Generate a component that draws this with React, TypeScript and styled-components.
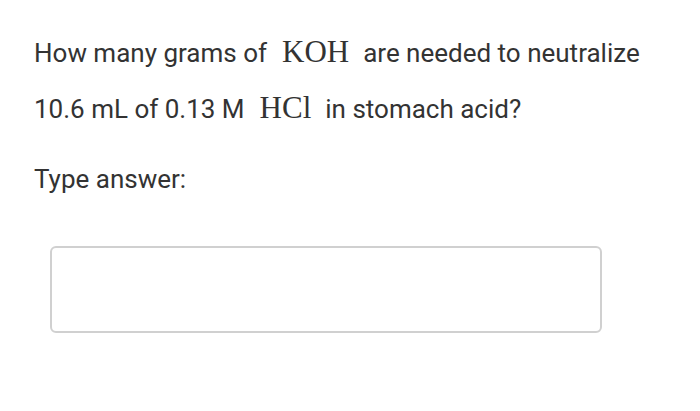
import React from "react";
import styled, { createGlobalStyle } from "styled-components";

const Global = createGlobalStyle`
  html, body { margin: 0; padding: 0; background: #fff; }
  body { font-family: Roboto, "Noto Sans", sans-serif; color: #333; }
`;

const Page = styled.div`
  width: 700px;
  height: 411px;
  box-sizing: border-box;
  padding: 25px 0 0 34px;
`;

const Question = styled.p`
  margin: 0;
  font-size: 26px;
  line-height: 56px;
  color: #333;
`;

const Chem = styled.span`
  font-family: "Liberation Serif", "DejaVu Serif", serif;
  font-size: 31px;
  line-height: 1;
  margin: 0 14px 0 15px;
`;

const Prompt = styled.div`
  margin-top: 27px;
  font-size: 26px;
  color: #333;
`;

const AnswerBox = styled.input`
  display: block;
  margin: 52px 0 0 16px;
  width: 552px;
  height: 87px;
  box-sizing: border-box;
  border: 2px solid #d0d0d0;
  border-radius: 6px;
  background: #fff;
  outline: none;
`;

export default function App() {
  return (
    <>
      <Global />
      <Page>
        <Question>
          How many grams of<Chem>KOH</Chem>are needed to neutralize
          <br />
          10.6 mL of 0.13 M<Chem>HCl</Chem>in stomach acid?
        </Question>
        <Prompt>Type answer:</Prompt>
        <AnswerBox type="text" aria-label="answer" />
      </Page>
    </>
  );
}
